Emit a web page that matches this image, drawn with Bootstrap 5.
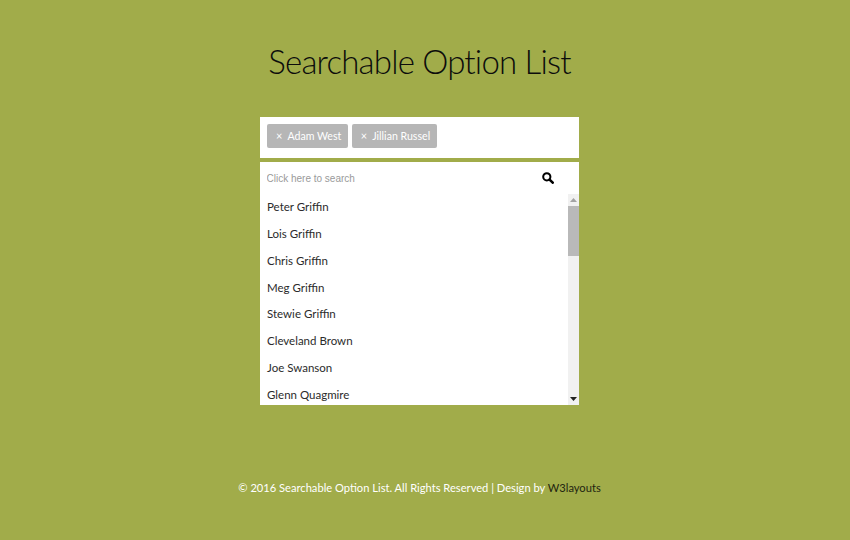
<!DOCTYPE html>
<html lang="en">
<head>
<meta charset="utf-8">
<title>Searchable Option List</title>
<link href="https://cdn.jsdelivr.net/npm/bootstrap@5.3.0/dist/css/bootstrap.min.css" rel="stylesheet">
<style>
html,body{height:100%;}
body{background:#a1ac4a;font-family:"Lato","Liberation Sans",sans-serif;overflow:hidden;}
.page-wrap{width:839px;height:540px;padding-top:41px;}
.sol-title{font-family:"Lato",sans-serif;font-weight:300;font-size:33px;line-height:40px;color:#0c0c0c;margin:0 0 36px;letter-spacing:-.8px;}
.sol-box{width:319px;margin-left:260px;}
.sol-selected{height:41px;padding:7px;gap:3.5px;}
.sol-chip{background:#b6b6b6;color:#fff;font-size:10.6px;height:24px;line-height:24px;padding:0 7px 0 9px;border-radius:2px;}
.sol-x{font-size:11px;margin-right:5px;}
.sol-search{height:32px;margin-top:4px;padding:0 25px 0 6.5px;}
.sol-search input{border:0;outline:0;padding:0;flex:1;min-width:0;font:10px "Liberation Sans",Arial,sans-serif;color:#555;}
.sol-search input::placeholder{color:#9a9a9a;opacity:1;}
.sol-body{height:211px;}
.sol-list{flex:1;padding:.4px 7px 0;}
.sol-item{height:26.75px;line-height:26.75px;font-size:11.5px;color:#2b2b2b;}
.sol-bar{width:11px;background:#f1f1f1;}
.sol-arrow{height:12px;}
.sol-thumb{height:50px;background:#b9b9b9;}
.sol-foot{margin-top:74px;font-size:11.15px;line-height:18px;color:#fff;}
.sol-foot a{color:#1f2410;text-decoration:none;}
</style>
</head>
<body class="m-0">
<div class="page-wrap">
  <h1 class="sol-title text-center">Searchable Option List</h1>
  <div class="sol-box">
    <div class="sol-selected bg-white d-flex align-items-start">
      <span class="sol-chip"><span class="sol-x">×</span>Adam West</span>
      <span class="sol-chip"><span class="sol-x">×</span>Jillian Russel</span>
    </div>
    <div class="sol-search bg-white d-flex align-items-center">
      <input type="text" placeholder="Click here to search" aria-label="Search">
      <svg width="12" height="12" viewBox="0 0 13 13" aria-hidden="true"><circle cx="5.2" cy="5.2" r="3.9" fill="none" stroke="#000" stroke-width="2.2"/><path d="M8.2 8.2 11.6 11.6" stroke="#000" stroke-width="2.8" stroke-linecap="round"/></svg>
    </div>
    <div class="sol-body bg-white d-flex">
      <div class="sol-list overflow-hidden">
        <div class="sol-item">Peter Griffin</div>
        <div class="sol-item">Lois Griffin</div>
        <div class="sol-item">Chris Griffin</div>
        <div class="sol-item">Meg Griffin</div>
        <div class="sol-item">Stewie Griffin</div>
        <div class="sol-item">Cleveland Brown</div>
        <div class="sol-item">Joe Swanson</div>
        <div class="sol-item">Glenn Quagmire</div>
      </div>
      <div class="sol-bar d-flex flex-column">
        <div class="sol-arrow d-flex align-items-center justify-content-center"><svg width="7" height="4" viewBox="0 0 7 4" aria-hidden="true"><path d="M3.5 0 7 4H0z" fill="#a3a3a3"/></svg></div>
        <div class="sol-thumb"></div>
        <div class="flex-grow-1"></div>
        <div class="sol-arrow d-flex align-items-center justify-content-center"><svg width="7" height="4" viewBox="0 0 7 4" aria-hidden="true"><path d="M0 0H7L3.5 4z" fill="#222"/></svg></div>
      </div>
    </div>
  </div>
  <p class="sol-foot text-center mb-0">© 2016 Searchable Option List. All Rights Reserved | Design by <a href="#">W3layouts</a></p>
</div>
<script src="https://cdn.jsdelivr.net/npm/bootstrap@5.3.0/dist/js/bootstrap.bundle.min.js"></script>
</body>
</html>
